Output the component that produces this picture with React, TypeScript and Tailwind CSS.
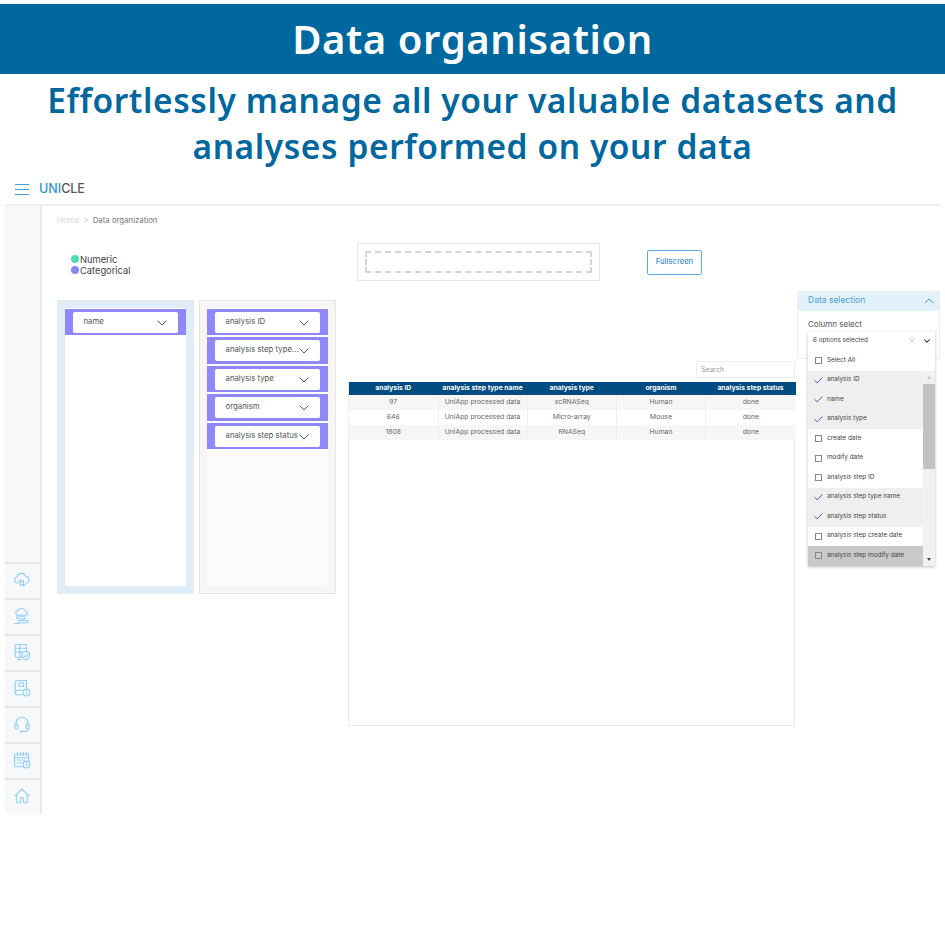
import { ChevronDown, ChevronUp, X, Check } from "lucide-react";

const numericColumns = ["name"];
const categoricalColumns = [
  "analysis ID",
  "analysis step type...",
  "analysis type",
  "organism",
  "analysis step status",
];

const rows = [
  ["97", "UniApp processed data", "scRNASeq", "Human", "done"],
  ["646", "UniApp processed data", "Micro-array", "Mouse", "done"],
  ["1808", "UniApp processed data", "RNASeq", "Human", "done"],
];

const headers = [
  "analysis ID",
  "analysis step type name",
  "analysis type",
  "organism",
  "analysis step status",
];

const options = [
  { label: "analysis ID", checked: true },
  { label: "name", checked: true },
  { label: "analysis type", checked: true },
  { label: "create date", checked: false },
  { label: "modify date", checked: false },
  { label: "analysis step ID", checked: false },
  { label: "analysis step type name", checked: true },
  { label: "analysis step status", checked: true },
  { label: "analysis step create date", checked: false },
  { label: "analysis step modify date", checked: false, hover: true },
];

const sideIcons = [
  <g key="cloud">
    <path d="M7 16H6a4 4 0 0 1-.6-7.9A6 6 0 0 1 17 7.200a4.500 4.500 0 0 1 1 8.800h-1" />
    <path d="M10 20v-8M8 14l2-2 2 2M14 12v8M12 18l2 2 2-2" />
  </g>,
  <g key="server">
    <path d="M8 11H7a3 3 0 0 1-.4-6A5 5 0 0 1 16 4.800a3.200 3.200 0 0 1 1 6.200z" />
    <rect x="5" y="13" width="11" height="3" rx="1" />
    <rect x="8" y="18" width="12" height="3" rx="1" />
    <path d="M2 22h6" />
  </g>,
  <g key="shield">
    <rect x="3" y="2" width="15" height="17" rx="1" />
    <path d="M3 7h15M3 12h10M9 2v17M11 22H6" />
    <path d="M17 11l5 2v4c0 3-2.500 4.500-5 6-2.500-1.500-5-3-5-6v-4z" fill="#f7f8fa" />
    <path d="M15 17l1.500 1.500 3-3" />
  </g>,
  <g key="book">
    <path d="M13 21H6a3 3 0 0 1-3-3V5a3 3 0 0 1 3-3h12v11" />
    <path d="M3 18a3 3 0 0 1 3-3h7" />
    <rect x="8" y="5" width="6" height="5" />
    <circle cx="18" cy="18" r="4.500" fill="#f7f8fa" />
    <path d="M18 16v1M18 18.500V20" />
  </g>,
  <g key="headset">
    <path d="M4 14v-3a8 8 0 0 1 16 0v3" />
    <rect x="2.500" y="12" width="4" height="7" rx="2" />
    <rect x="17.500" y="12" width="4" height="7" rx="2" />
    <path d="M19.500 19v1a3 3 0 0 1-3 2H12" />
    <circle cx="11" cy="22" r="1" />
  </g>,
  <g key="calendar">
    <rect x="2" y="4" width="19" height="17" rx="2" />
    <path d="M2 9h19M6 2v4M10 2v4M14 2v4M18 2v4" />
    <path d="M6 12h2M10 12h2M14 12h2M6 16h2M10 16h2" />
    <circle cx="18" cy="18" r="4.500" fill="#f7f8fa" />
    <path d="M18 16v2l1.500 1" />
  </g>,
  <g key="home">
    <path d="M2.500 12 12 3l9.500 9" />
    <path d="M5 10v11h5v-5a2 2 0 0 1 4 0v5h5V10" />
  </g>,
];

function ColumnChip({ label }: { label: string }) {
  return (
    <div className="h-[26.500px] bg-[#8f87fb] pl-[8px] pr-[8px] pt-[3px]">
      <div className="flex h-[21px] items-start rounded-[2px] bg-white pl-[10.500px] pr-[8px] pt-[3px] text-[7.800px] leading-[12px] text-[#555]">
        <span className="min-w-0 flex-1 whitespace-nowrap">{label}</span>
        <ChevronDown className="h-[16px] w-[16px] shrink-0 text-[#555]" strokeWidth={1.5} />
      </div>
    </div>
  );
}

export default function App() {
  return (
    <div className="h-[945px] w-[945px] overflow-hidden bg-white font-['Inter',sans-serif]">
      <div className="h-[4px]" />
      <div className="flex h-[70px] items-center justify-center bg-[#00679f] font-['Noto_Sans',sans-serif] text-[40px] font-semibold tracking-[0.6px] text-white">
        Data organisation
      </div>
      <div className="h-[96px] pt-[3px] text-center font-['Noto_Sans',sans-serif] text-[33.500px] font-semibold leading-[46px] tracking-[0.58px] text-[#00679f]">
        <div>Effortlessly manage all your valuable datasets and</div>
        <div>analyses performed on your data</div>
      </div>

      {/* App top bar */}
      <div className="ml-[5px] mr-[5px] flex h-[35.500px] items-center border-b-2 border-[#f0f0f0] pl-[10px] pt-[5px]">
        <div className="flex w-[14px] flex-col gap-[3.500px]">
          <div className="h-[1.500px] bg-[#3b9dd9]" />
          <div className="h-[1.500px] bg-[#3b9dd9]" />
          <div className="h-[1.500px] bg-[#3b9dd9]" />
        </div>
        <div className="ml-[10px] text-[12.500px] font-medium leading-none">
          <span className="text-[#2d95d3]">UNI</span>
          <span className="text-[#555]">CLE</span>
        </div>
      </div>

      <div className="ml-[5px] flex h-[608.500px]">
        {/* Sidebar */}
        <div className="flex w-[37px] flex-col justify-end border-r-2 border-[#e8e8e8] bg-[#f7f8fa]">
          {sideIcons.map((icon, i) => (
            <div key={i} className="flex h-[36px] items-center justify-center border-t-2 border-[#e6e6e6] pb-[3px] pr-[2px]">
              <svg
                viewBox="0 0 24 24"
                className="h-[18px] w-[18px]"
                fill="none"
                stroke="#93cef8"
                strokeWidth={1.5}
                strokeLinecap="round"
                strokeLinejoin="round"
              >
                {icon}
              </svg>
            </div>
          ))}
        </div>

        <div className="flex-1 pl-[15px]">
          <div className="flex h-[37px] items-start gap-[4px] pt-[9px] text-[8px] leading-[10px]">
            <span className="text-[#d5dbe0]">Home</span>
            <span className="text-[#c5c9cd]">&gt;</span>
            <span className="text-[7.800px] text-[#777]">Data organization</span>
          </div>

          <div className="flex">
            {/* Column buckets */}
            <div className="w-[279px]">
              <div className="h-[57px] pl-[14px] pt-[11px] text-[9.300px] leading-[11px] text-[#444]">
                <div className="flex items-center gap-[1px]">
                  <span className="h-[8px] w-[8px] rounded-full bg-[#4fdcb0]" />
                  Numeric
                </div>
                <div className="flex items-center gap-[1px]">
                  <span className="h-[8px] w-[8px] rounded-full bg-[#8787f8]" />
                  Categorical
                </div>
              </div>
              <div className="flex gap-[5px]">
                <div className="h-[294px] w-[137px] border border-[#e4e9ee] bg-[#deedf8] p-[7px]">
                  <div className="h-full rounded-[2px] bg-white pt-[1px]">
                    {numericColumns.map((c) => (
                      <ColumnChip key={c} label={c} />
                    ))}
                  </div>
                </div>
                <div className="h-[294px] w-[137px] border border-[#e6e6e6] bg-[#f6f6f6] p-[7px]">
                  <div className="flex h-full flex-col gap-[2px] rounded-[2px] bg-[#fbfbfb] pt-[1px]">
                    {categoricalColumns.map((c) => (
                      <ColumnChip key={c} label={c} />
                    ))}
                  </div>
                </div>
              </div>
            </div>

            {/* Table area */}
            <div className="ml-[12px] w-[447px]">
              <div className="flex h-[118px] items-start">
                <div className="ml-[9px] mr-[47px] h-[38px] w-[243px] border border-[#e8e8e8] p-[7px]">
                  <div className="h-full rounded-[2px] border-2 border-dashed border-[#d4d4d4]" />
                </div>
                <button className="mt-[7px] h-[25px] w-[55px] rounded-[2px] border border-[#5aa9e0] text-[7.600px] font-medium text-[#3d8fcb]">
                  Fullscreen
                </button>
              </div>
              <div className="flex h-[21px] justify-end">
                <div className="h-[17px] w-[99px] rounded-[2px] border border-[#ececec] pl-[4px] text-[7px] leading-[16px] text-[#999]">
                  Search
                </div>
              </div>
              <div className="h-[344px] border border-t-0 border-[#e8e8e8]">
                <table className="-ml-[1px] w-[447px] table-fixed border-collapse text-center text-[6.800px]">
                  <colgroup>
                    <col className="w-[89.500px]" />
                    <col className="w-[89px]" />
                    <col className="w-[89.500px]" />
                    <col className="w-[89px]" />
                    <col className="w-[90px]" />
                  </colgroup>
                  <thead>
                    <tr className="h-[13px] bg-[#004b80] text-white">
                      {headers.map((h) => (
                        <th key={h} className="whitespace-nowrap p-0 font-bold">
                          {h}
                        </th>
                      ))}
                    </tr>
                  </thead>
                  <tbody>
                    {rows.map((row, i) => (
                      <tr key={row[0]} className={i % 2 === 0 ? "h-[15px] bg-[#f6f6f6]" : "h-[15px] bg-white"}>
                        {row.map((cell, j) => (
                          <td key={j} className="whitespace-nowrap border-l border-[#eeeeee] p-0 text-[#666]">
                            {cell}
                          </td>
                        ))}
                      </tr>
                    ))}
                  </tbody>
                </table>
              </div>
            </div>

            {/* Data selection panel */}
            <div className="relative ml-[2px] mt-[48px] h-[68px] w-[143px] self-start border border-[#eeeeee]">
              <div className="flex h-[19px] items-center justify-between bg-[#e3f1fb] pb-[1px] pl-[10px] pr-[2px] text-[8.500px] text-[#4d9bd4]">
                Data selection
                <ChevronUp className="h-[16px] w-[16px] text-[#4d9bd4]" strokeWidth={1.5} />
              </div>
              <div className="pl-[10px] pt-[7px] text-[8px] leading-[12px] text-[#555]">Column select</div>
              <div className="absolute left-[10px] top-[40px] w-[127px] shadow-[0_1px_3px_rgba(0,0,0,0.25)]">
                <div className="flex h-[18px] items-center rounded-[2px] bg-white pl-[5px] pr-[3px] text-[6.300px] text-[#444]">
                  <span className="flex-1">6 options selected</span>
                  <X className="mr-[6px] h-[8px] w-[8px] text-[#999]" strokeWidth={1.5} />
                  <ChevronDown className="h-[10px] w-[10px] text-[#222]" strokeWidth={2.5} />
                </div>
                <div className="mt-[1px] bg-white text-[6.400px] text-[#444]">
                  <div className="flex h-[20px] items-center gap-[5px] pl-[7px]">
                    <span className="h-[7px] w-[7px] border border-[#888]" />
                    Select All
                  </div>
                  <div className="flex">
                    <div className="w-[115px]">
                      {options.map((o) => (
                        <div
                          key={o.label}
                          className={
                            o.hover
                              ? "flex h-[19.500px] items-center gap-[5px] bg-[#c9c9c9] pl-[7px]"
                              : o.checked
                                ? "flex h-[19.500px] items-center gap-[5px] bg-[#efefef] pl-[7px]"
                                : "flex h-[19.500px] items-center gap-[5px] bg-white pl-[7px]"
                          }
                        >
                          {o.checked ? (
                            <Check className="-mx-[2px] h-[11px] w-[11px] text-[#5b3fa8]" strokeWidth={2} />
                          ) : (
                            <span className="h-[7px] w-[7px] border border-[#888]" />
                          )}
                          <span className="whitespace-nowrap">{o.label}</span>
                        </div>
                      ))}
                    </div>
                    <div className="flex w-[12px] flex-col items-center bg-[#f1f1f1]">
                      <div className="mt-[5px] h-0 w-0 border-x-[2.500px] border-b-[3px] border-x-transparent border-b-[#c4c4c4]" />
                      <div className="mt-[5px] h-[85px] w-full bg-[#c1c1c1]" />
                      <div className="mt-auto mb-[5px] h-0 w-0 border-x-[2.500px] border-t-[3px] border-x-transparent border-t-[#444]" />
                    </div>
                  </div>
                </div>
              </div>
            </div>
          </div>
        </div>
      </div>
    </div>
  );
}
